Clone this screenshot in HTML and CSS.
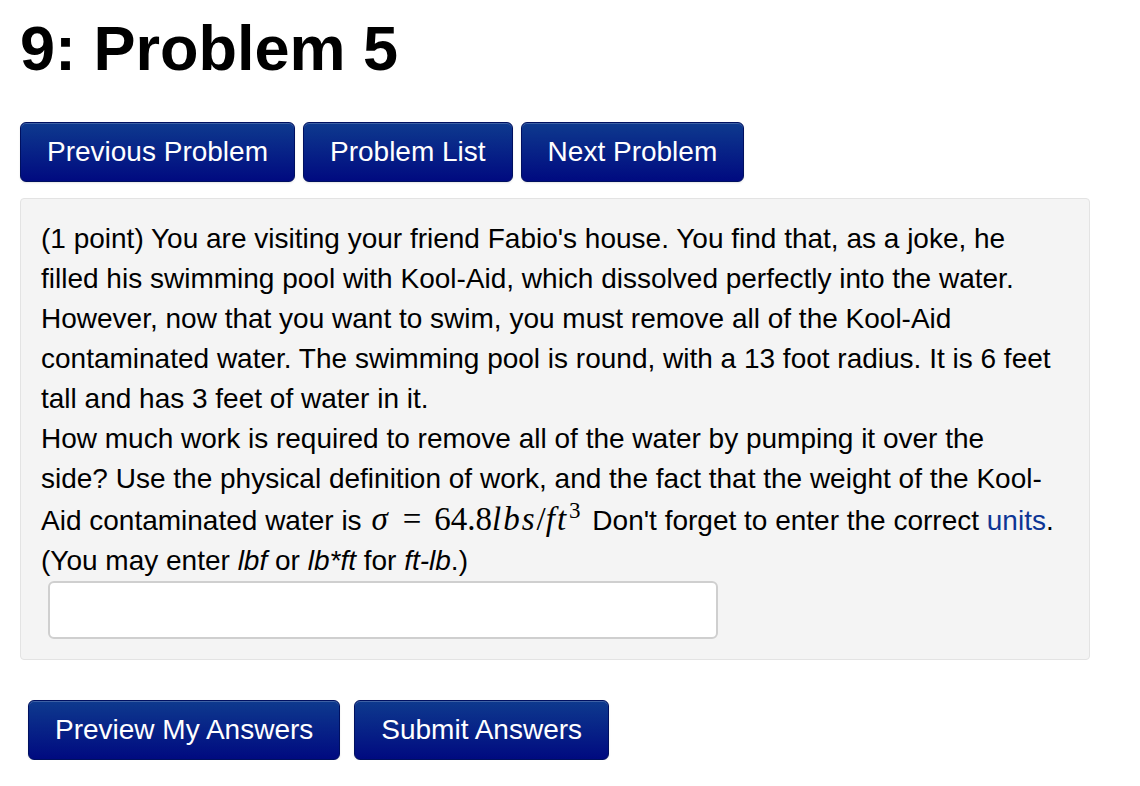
FILE: index.html
```html
<!DOCTYPE html>
<html lang="en">
<head>
    <meta charset="UTF-8">
    <title>9: Problem 5</title>
    <link rel="stylesheet" href="styles.css">
</head>
<body>
    <h1 class="page-title">9: Problem 5</h1>
    <div class="nav-buttons">
        <a class="btn" href="#">Previous Problem</a>
        <a class="btn" href="#">Problem List</a>
        <a class="btn" href="#">Next Problem</a>
    </div>
    <div class="problem">
        <p class="problem-text">
            (1 point) You are visiting your friend Fabio's house. You find that, as a joke, he filled his swimming pool with Kool-Aid, which dissolved perfectly into the water. However, now that you want to swim, you must remove all of the Kool-Aid contaminated water. The swimming pool is round, with a 13 foot radius. It is 6 feet tall and has 3 feet of water in it.<br>
            How much work is required to remove all of the water by pumping it over the side? Use the physical definition of work, and the fact that the weight of the Kool-Aid contaminated water is <span class="math"><i class="mi">σ</i><span class="mo">=</span>64.8<i class="mi">lbs</i>/<i class="mi">ft</i><sup>3</sup></span> Don't forget to enter the correct <a class="units" href="#">units</a>.<br>
            (You may enter <i>lbf</i> or <i>lb*ft</i> for <i>ft-lb</i>.)
        </p>
        <input class="answer" type="text">
    </div>
    <div class="submit-buttons">
        <button class="btn">Preview My Answers</button>
        <button class="btn">Submit Answers</button>
    </div>
</body>
</html>
```

FILE: styles.css
```css
body { margin: 0; padding: 0 20px; font-family: "Liberation Sans", Arial, Helvetica, sans-serif; font-size: 28px; line-height: 40px; color: #000; background: #fff; }
.page-title { margin: 0; padding-top: 17px; font-size: 63px; line-height: 63px; font-weight: bold; }
.nav-buttons { display: flex; gap: 8px; margin-top: 42px; }
.btn { display: inline-block; padding: 13px 26px; font-family: inherit; font-size: 28px; line-height: 32px; color: #fff; text-decoration: none; border: 1px solid #001060; border-radius: 6px; background: linear-gradient(#0e3a8e, #000a80); box-shadow: inset 0 1px 0 rgba(255, 255, 255, 0.2), 0 1px 2px rgba(0, 0, 0, 0.1); cursor: pointer; }
.problem { box-sizing: border-box; width: 1070px; margin-top: 16px; padding: 20px 34px 20px 20px; background: #f4f4f4; border: 1px solid #e3e3e3; border-radius: 4px; }
.problem-text { margin: 0; }
.math { font-family: "Liberation Serif", "Times New Roman", serif; font-size: 33px; line-height: 40px; margin-left: 2px; }
.math .mi { letter-spacing: 2px; }
.math .mo { margin: 0 13px; }
.math sup { font-size: 23px; line-height: 0; margin: 0 4px 0 1px; }
.units { color: #0d3595; text-decoration: none; }
.answer { display: block; box-sizing: border-box; width: 670px; height: 58px; margin-left: 7px; padding: 8px 12px; font-size: 28px; border: 2px solid #cfcfcf; border-radius: 6px; background: #fff; }
.submit-buttons { display: flex; gap: 14px; margin-top: 40px; padding-left: 8px; }
```
